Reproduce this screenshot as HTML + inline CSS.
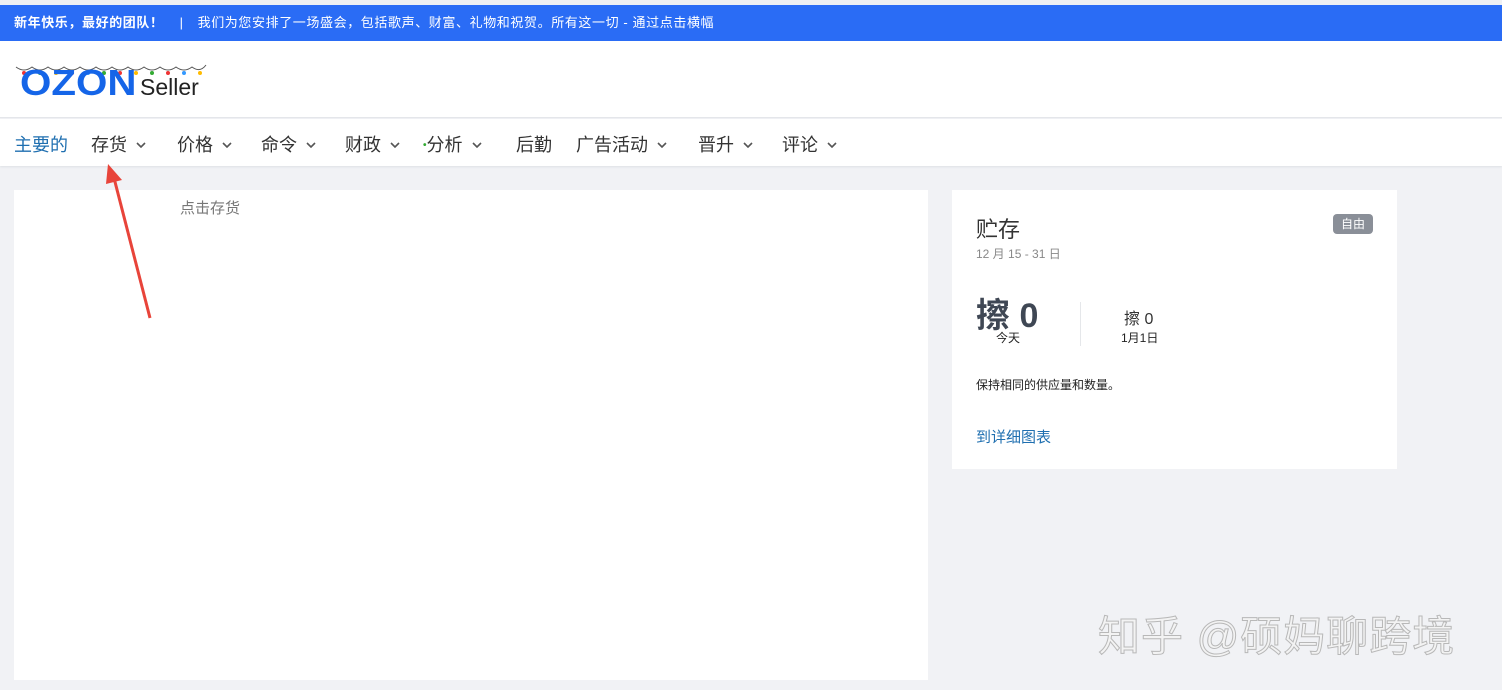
<!DOCTYPE html><html><head><meta charset="utf-8"><style>
*{margin:0;padding:0;box-sizing:border-box}
body{width:1502px;height:690px;overflow:hidden;background:#f1f2f5;font-family:"Liberation Sans","Noto Sans CJK SC",sans-serif;position:relative}
.top{position:absolute;top:0;left:0;width:100%;height:5px;background:#eef0f3}
.bar{position:absolute;top:5px;left:0;width:100%;height:36px;background:#2a6cf5;color:#fff;font-size:13px;line-height:36px;padding-left:14px;letter-spacing:0.6px}
.hdr{position:absolute;top:41px;left:0;width:100%;height:77px;background:#fff;border-bottom:1px solid #e4e6ea}
.nav{position:absolute;top:119px;left:0;width:100%;height:47px;background:#fff;box-shadow:0 1px 2px #dde0e5}
.nav span{position:absolute;top:12px;font-size:18px;color:#333;white-space:nowrap}
.nav svg{margin-left:9px;vertical-align:3px}
.p{position:absolute;background:#fff}
</style></head><body>
<div class="top"></div>
<div class="bar"><b>新年快乐，最好的团队！</b><span style="margin:0 14px 0 16px">|</span>我们为您安排了一场盛会，包括歌声、财富、礼物和祝贺。所有这一切 - 通过点击横幅</div>
<div class="hdr">
<svg style="position:absolute;left:14px;top:20px" width="195" height="16"><path d="M2 6 Q10 12 18 6 Q26 12 34 6 Q42 12 50 6 Q58 12 66 6 Q74 12 82 6 Q90 12 98 6 Q106 12 114 6 Q122 12 130 6 Q138 12 146 6 Q154 12 162 6 Q170 12 178 6 Q186 12 192 4" stroke="#555" fill="none"/>
<g><circle cx="10" cy="12" r="2" fill="#e33"/><circle cx="26" cy="12" r="2" fill="#3a3"/><circle cx="42" cy="12" r="2" fill="#fb0"/><circle cx="58" cy="12" r="2" fill="#e33"/><circle cx="74" cy="12" r="2" fill="#39f"/><circle cx="90" cy="12" r="2" fill="#3a3"/><circle cx="106" cy="12" r="2" fill="#e33"/><circle cx="122" cy="12" r="2" fill="#fb0"/><circle cx="138" cy="12" r="2" fill="#3a3"/><circle cx="154" cy="12" r="2" fill="#e33"/><circle cx="170" cy="12" r="2" fill="#39f"/><circle cx="186" cy="12" r="2" fill="#fb0"/></g></svg>
<div style="position:absolute;left:20px;top:24px;font-size:36px;line-height:36px;font-weight:bold;color:#1565e8;transform:scaleX(1.12);transform-origin:0 0">OZON</div>
<div style="position:absolute;left:140px;top:33px;font-size:23px;color:#222">Seller</div>
</div>
<div class="nav">
<span style="left:14px;color:#1f6fb0">主要的</span>
<span style="left:91px">存货<svg width="10" height="6"><path d="M1 1 L5 5 L9 1" stroke="#555" stroke-width="1.6" fill="none"/></svg></span>
<span style="left:177px">价格<svg width="10" height="6"><path d="M1 1 L5 5 L9 1" stroke="#555" stroke-width="1.6" fill="none"/></svg></span>
<span style="left:261px">命令<svg width="10" height="6"><path d="M1 1 L5 5 L9 1" stroke="#555" stroke-width="1.6" fill="none"/></svg></span>
<span style="left:345px">财政<svg width="10" height="6"><path d="M1 1 L5 5 L9 1" stroke="#555" stroke-width="1.6" fill="none"/></svg></span>
<span style="left:423px"><b style="color:#3a3;font-size:10px;vertical-align:3px">•</b>分析<svg width="10" height="6"><path d="M1 1 L5 5 L9 1" stroke="#555" stroke-width="1.6" fill="none"/></svg></span>
<span style="left:516px">后勤</span>
<span style="left:576px">广告活动<svg width="10" height="6"><path d="M1 1 L5 5 L9 1" stroke="#555" stroke-width="1.6" fill="none"/></svg></span>
<span style="left:698px">晋升<svg width="10" height="6"><path d="M1 1 L5 5 L9 1" stroke="#555" stroke-width="1.6" fill="none"/></svg></span>
<span style="left:782px">评论<svg width="10" height="6"><path d="M1 1 L5 5 L9 1" stroke="#555" stroke-width="1.6" fill="none"/></svg></span>
</div>
<div class="p" style="left:14px;top:190px;width:914px;height:490px"><div style="position:absolute;left:166px;top:7px;font-size:15px;color:#777">点击存货</div></div>
<svg style="position:absolute;left:100px;top:160px" width="60" height="165"><path d="M50 158 L14 18" stroke="#e8443a" stroke-width="3"/><path d="M8 4 L22 20 L6 24 Z" fill="#e8443a"/></svg>
<div class="p" style="left:952px;top:190px;width:445px;height:279px">
<div style="position:absolute;left:24px;top:22px;font-size:22px;color:#333">贮存</div>
<div style="position:absolute;left:24px;top:55px;font-size:12px;color:#888">12 月 15 - 31 日</div>
<div style="position:absolute;left:381px;top:24px;width:40px;height:20px;background:#8a8f98;border-radius:4px;color:#fff;font-size:12px;text-align:center;line-height:20px">自由</div>
<div style="position:absolute;left:24px;top:98px;font-size:34px;font-weight:bold;color:#3f4754">擦 0</div>
<div style="position:absolute;left:44px;top:139px;font-size:12px;color:#222">今天</div>
<div style="position:absolute;left:128px;top:112px;width:1px;height:44px;background:#e5e7ea"></div>
<div style="position:absolute;left:172px;top:115px;font-size:16px;color:#333">擦 0</div>
<div style="position:absolute;left:169px;top:139px;font-size:12px;color:#222">1月1日</div>
<div style="position:absolute;left:24px;top:186px;font-size:12px;color:#222">保持相同的供应量和数量。</div>
<div style="position:absolute;left:24px;top:236px;font-size:15px;color:#1f6fb0">到详细图表</div>
</div>
<div style="position:absolute;left:1098px;top:603px;font-size:42px;color:#f3f3f3;-webkit-text-stroke:1px #b8b8b8;letter-spacing:1px">知乎 @硕妈聊跨境</div>
</body></html>
